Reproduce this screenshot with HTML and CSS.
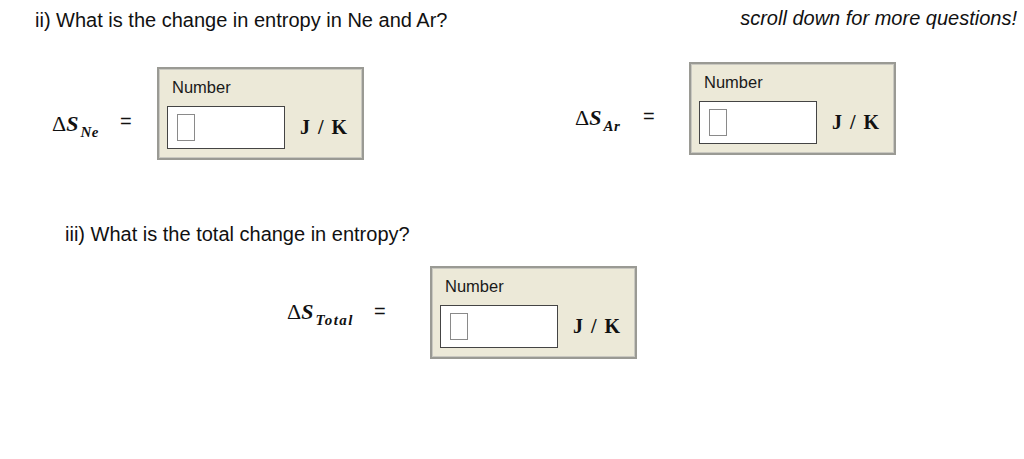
FILE: index.html
```html
<!DOCTYPE html>
<html>
<head>
<meta charset="utf-8">
<link rel="stylesheet" href="styles.css">
</head>
<body>
<div class="page">
  <div class="toprow">
    <h2 class="q q-ii">ii) What is the change in entropy in Ne and Ar?</h2>
    <p class="scroll">scroll down for more questions!</p>
  </div>
  <div class="pair">
    <div class="eqn eqn-ne">
      <div class="lhs"><span class="delta">Δ</span><span class="sym">S</span><sub class="sub">Ne</sub></div>
      <div class="eq">=</div>
      <div class="answer">
        <div class="num-label">Number</div>
        <div class="ans-row">
          <div class="field"><span class="caret"></span></div>
          <span class="unit">J / K</span>
        </div>
      </div>
    </div>
    <div class="eqn eqn-ar">
      <div class="lhs"><span class="delta">Δ</span><span class="sym">S</span><sub class="sub">Ar</sub></div>
      <div class="eq">=</div>
      <div class="answer">
        <div class="num-label">Number</div>
        <div class="ans-row">
          <div class="field"><span class="caret"></span></div>
          <span class="unit">J / K</span>
        </div>
      </div>
    </div>
  </div>
  <h2 class="q q-iii">iii) What is the total change in entropy?</h2>
  <div class="eqn eqn-total">
    <div class="lhs"><span class="delta">Δ</span><span class="sym">S</span><sub class="sub">Total</sub></div>
    <div class="eq">=</div>
    <div class="answer">
      <div class="num-label">Number</div>
      <div class="ans-row">
        <div class="field"><span class="caret"></span></div>
        <span class="unit">J / K</span>
      </div>
    </div>
  </div>
</div>
</body>
</html>
```
FILE: styles.css
```css
html, body {
  margin: 0;
  padding: 0;
  background: #ffffff;
}
body {
  font-family: "Liberation Sans", Arial, sans-serif;
  color: #111;
  width: 1024px;
  height: 459px;
  overflow: hidden;
}
.page {
  display: flex;
  flex-direction: column;
}
.toprow {
  display: flex;
  justify-content: space-between;
  align-items: flex-start;
  height: 40px;
}
.q {
  font-size: 20px;
  font-weight: normal;
  margin: 0;
  line-height: 24px;
}
.q-ii {
  margin: 8px 0 0 35px;
}
.q-iii {
  margin-left: 65px;
}
.scroll {
  margin: 6px 7px 0 0;
  font-size: 20px;
  line-height: 24px;
  font-style: italic;
}
.pair {
  display: flex;
  align-items: flex-start;
  height: 182px;
}
.eqn {
  display: flex;
  align-items: flex-start;
}
.eqn-ne {
  margin: 27px 0 0 52px;
}
.eqn-ar {
  margin: 22px 0 0 211px;
}
.eqn-total {
  margin: 20px 0 0 287px;
}
.lhs {
  font-family: "Liberation Serif", "Times New Roman", serif;
  white-space: nowrap;
  font-size: 22px;
  line-height: 24px;
}
.delta {
  font-weight: normal;
}
.sym {
  font-weight: bold;
  font-style: italic;
}
.sub {
  font-weight: bold;
  font-style: italic;
  font-size: 15px;
  vertical-align: -6px;
  line-height: 0;
  margin-left: 2px;
  letter-spacing: 0.5px;
}
.eqn-total .sub {
  letter-spacing: 1.5px;
}
.eq {
  font-size: 20px;
  line-height: 20px;
  text-align: left;
}
.eqn-ne .lhs { width: 68px; margin-top: 45px; }
.eqn-ne .eq { width: 37px; margin-top: 44px; }
.eqn-ar .lhs { width: 68px; margin-top: 44px; }
.eqn-ar .eq { width: 46px; margin-top: 44px; }
.eqn-total .lhs { width: 87px; margin-top: 34px; }
.eqn-total .eq { width: 56px; margin-top: 35px; }
.answer {
  box-sizing: border-box;
  width: 207px;
  height: 93px;
  background: #ece9d8;
  border: 2px solid #9a9a94;
  box-shadow: inset 0 0 0 1px #c9c8c0;
  padding: 9px 7px 0 8px;
}
.num-label {
  font-size: 16.5px;
  line-height: 19px;
  margin-left: 5px;
  color: #1a1a1a;
}
.ans-row {
  display: flex;
  align-items: center;
  margin-top: 9px;
  gap: 15px;
}
.field {
  box-sizing: border-box;
  width: 118px;
  height: 43px;
  background: #fff;
  border: 1px solid #444;
  padding: 7px 0 0 9px;
}
.caret {
  display: block;
  box-sizing: border-box;
  width: 18px;
  height: 27px;
  border: 1px solid #8a8a8a;
}
.unit {
  font-family: "Liberation Serif", "Times New Roman", serif;
  font-weight: bold;
  font-size: 20px;
  word-spacing: 3px;
  white-space: nowrap;
}
```
